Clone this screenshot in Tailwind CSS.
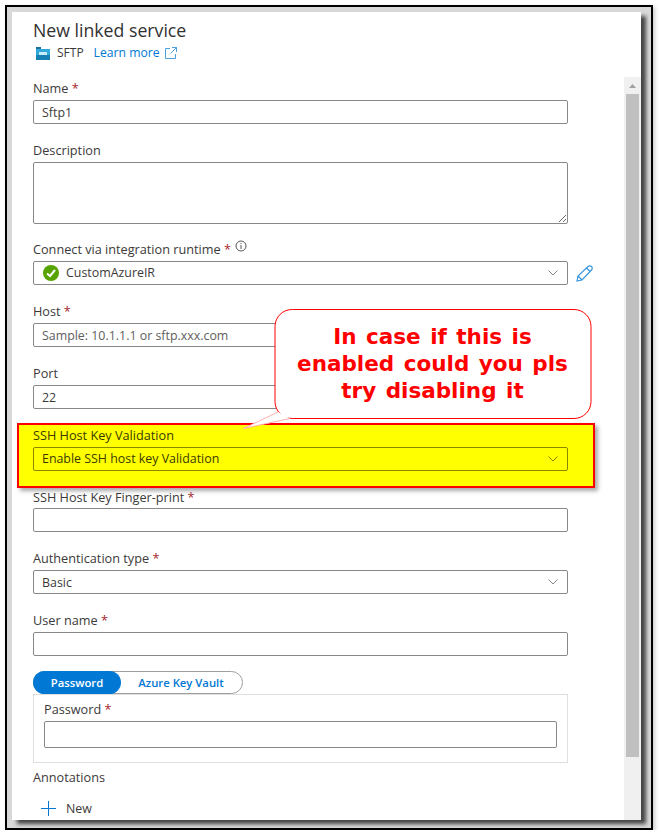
<!DOCTYPE html>
<html lang="en">
<head>
  <meta charset="UTF-8" />
  <title>New linked service</title>
  <script src="https://cdn.jsdelivr.net/npm/@tailwindcss/browser@4"></script>
</head>
<body class="bg-white text-[#3b3a39] text-[12.7px] font-['Open_Sans',sans-serif]">
  <!-- screenshot frame -->
  <div class="ml-[5px] mt-[5px] w-[648px] h-[825px] border-2 border-black bg-[#d9d9d9] pl-[5px] pt-[5px] shadow-[2px_2px_4px_#ccc]">
    <div class="relative w-[629px] h-[808px] bg-white shadow-[5px_4px_4px_#444] flex flex-col">
      <!-- header -->
      <div class="h-[65px] pl-[21px] shrink-0">
        <h1 class="pt-[6px] h-[30px] text-[17.700px] leading-[24px] text-[#323130]">New linked service</h1>
        <div class="flex items-center h-[20px] mt-[1px]">
          <svg class="ml-[3px] w-[14px] h-[13px]" viewBox="0 0 14 13">
            <path d="M0 1h5v1h9v11H0z" fill="#2fa8dc" />
            <path d="M0 8h14v5H0z" fill="#1580b4" />
            <path d="M0 0h5v2H0z" fill="#1c6f99" />
            <rect x="3" y="5" width="8" height="3" fill="#c4ecfa" />
          </svg>
          <span class="ml-[7px] text-[12px]">SFTP</span>
          <a class="ml-[10px] text-[#0078d4] text-[12.200px]">Learn more</a>
          <svg class="ml-[5px] w-[12px] h-[12px]" viewBox="0 0 12 12" fill="none" stroke="#4ba0e0" stroke-width="1">
            <path d="M5 1.500H.5v10h10V7M7 .5h4.500V5M11.500 .5 5.500 6.500" />
          </svg>
        </div>
      </div>

      <div class="flex flex-1 min-h-0">
        <!-- form -->
        <div class="flex-1 min-w-0 pl-[21px] pt-[3px] overflow-hidden">
          <label class="block h-[20px] leading-[16px]">Name <span class="text-[#a4262c]">*</span></label>
          <input value="Sftp1" class="block w-[535px] h-[24px] border border-[#8a8886] rounded-[2px] px-[8px] text-[12.400px] mb-[18px]" />

          <label class="block h-[20px] leading-[16px]">Description</label>
          <textarea class="block w-[535px] h-[62px] border border-[#8a8886] rounded-[2px] mb-[17px]"></textarea>

          <label class="flex h-[20px] leading-[16px]">Connect via integration runtime&nbsp;<span class="text-[#a4262c]">*</span>
            <svg class="ml-[4px] -mt-[1px] w-[12px] h-[12px]" viewBox="0 0 12 12" fill="none" stroke="#555"><circle cx="6" cy="6" r="5" /><path d="M6 5v4M6 3v1" /></svg>
          </label>
          <div class="flex items-center mb-[18px]">
            <div class="flex items-center w-[535px] h-[24px] border border-[#8a8886] rounded-[2px] pl-[9px] pr-[9px]">
              <svg class="w-[16px] h-[16px]" viewBox="0 0 16 16"><circle cx="8" cy="8" r="8" fill="#57a300" /><path d="M4 8.500 7 11l5-6" fill="none" stroke="#fff" stroke-width="2" /></svg>
              <span class="ml-[7px] pt-[1px] text-[12.400px]">CustomAzureIR</span>
              <svg class="ml-auto w-[10px] h-[6px]" viewBox="0 0 10 6" fill="none" stroke="#8a8886"><path d="M.5.500 5 5l4.500-4.500" /></svg>
            </div>
            <svg class="ml-[8px] w-[17px] h-[17px]" viewBox="0 0 17 17" fill="none" stroke="#3a96dd" stroke-width="1.200"><path d="M1 16l1-5L12 1.500a2 2 0 0 1 3.500 3.500L6 15zM2 11l4 4M10.500 3l3.500 3.500" /></svg>
          </div>

          <label class="block h-[20px] leading-[16px]">Host <span class="text-[#a4262c]">*</span></label>
          <input placeholder="Sample: 10.1.1.1 or sftp.xxx.com" class="block w-[535px] h-[24px] border border-[#8a8886] rounded-[2px] px-[8px] text-[12.400px] placeholder:text-[#605e5c] mb-[18px]" />

          <label class="block h-[20px] leading-[16px]">Port</label>
          <input value="22" class="block w-[535px] h-[24px] border border-[#8a8886] rounded-[2px] px-[8px] text-[12.400px]" />

          <!-- highlighted field -->
          <div class="-ml-[16px] mt-[14px] w-[578px] h-[65px] border-2 border-[#ff0000] bg-[#ffff00] pl-[14px] pt-[2px] text-[#3b3a00] shadow-[3px_3px_4px_#aaa]">
            <label class="block h-[20px] leading-[16px]">SSH Host Key Validation</label>
            <div class="flex items-center justify-between w-[535px] h-[24px] border border-[#8a8800] rounded-[2px] pl-[8px] pr-[9px] text-[12.400px]">
              <span class="pt-[1px]">Enable SSH host key Validation</span>
              <svg class="w-[10px] h-[6px]" viewBox="0 0 10 6" fill="none" stroke="#8a8800"><path d="M.5.500 5 5l4.500-4.500" /></svg>
            </div>
          </div>

          <label class="block h-[20px] leading-[18px]">SSH Host Key Finger-print <span class="text-[#a4262c]">*</span></label>
          <input class="block w-[535px] h-[24px] border border-[#8a8886] rounded-[2px] mb-[18px]" />

          <label class="block h-[20px] leading-[16px]">Authentication type <span class="text-[#a4262c]">*</span></label>
          <div class="flex items-center justify-between w-[535px] h-[24px] border border-[#8a8886] rounded-[2px] pl-[8px] pr-[9px] text-[12.400px] mb-[18px]">
            <span class="pt-[2px]">Basic</span>
            <svg class="w-[10px] h-[6px]" viewBox="0 0 10 6" fill="none" stroke="#8a8886"><path d="M.5.500 5 5l4.500-4.500" /></svg>
          </div>

          <label class="block h-[20px] leading-[16px]">User name <span class="text-[#a4262c]">*</span></label>
          <input class="block w-[535px] h-[24px] border border-[#8a8886] rounded-[2px]" />

          <!-- password / key vault toggle -->
          <div class="flex w-[210px] h-[23px] mt-[15px] border border-[#a19f9d] rounded-full text-[11.300px] font-semibold text-[#0078d4]">
            <span class="w-[88px] -m-px h-[23px] pt-[2px] bg-[#0078d4] text-white rounded-full flex items-center justify-center">Password</span>
            <span class="flex-1 pt-[2px] flex items-center justify-center">Azure Key Vault</span>
          </div>
          <div class="w-[535px] h-[69px] border border-[#e1dfdd] px-[10px] pt-[5px]">
            <label class="block h-[21px] leading-[18px]">Password <span class="text-[#a4262c]">*</span></label>
            <input class="block w-[513px] h-[27px] border border-[#8a8886] rounded-[2px]" />
          </div>

          <div class="h-[20px] leading-[20px] mt-[4px]">Annotations</div>
          <div class="flex items-center mt-[11px] ml-[8px] h-[20px]">
            <svg class="w-[15px] h-[15px]" viewBox="0 0 15 15" stroke="#0078d4"><path d="M7.500 0v15M0 7.500h15" /></svg>
            <span class="ml-[10px] pt-[2px] text-[12.400px]">New</span>
          </div>
        </div>

        <!-- scrollbar -->
        <div class="w-[17px] shrink-0 bg-[#f0f0f0] pl-[2px]">
          <svg class="block ml-[3px] mt-[7px] w-[7px] h-[4px]" viewBox="0 0 7 4"><path d="M3.500 0 7 4H0z" fill="#a0a0a0" /></svg>
          <div class="w-[13px] h-[663px] mt-[6px] bg-[#c0c0c0]"></div>
        </div>
      </div>

      <!-- callout over the form -->
      <div class="absolute left-[231px] top-[297px] w-[349px] h-[120px]">
        <svg class="absolute inset-0" width="349" height="120" viewBox="0 0 349 120">
          <path d="M49.500.500H331a17 17 0 0 1 17 17v75a17 17 0 0 1-17 17H49.500a17 17 0 0 1-17.500-17V17.500a17 17 0 0 1 17.500-17z" fill="#fff" stroke="#ff0000" />
          <path d="M35 103 .5 119.500 47 109.500z" fill="#fff" />
          <path d="M35 103 .5 119.500 47 109.500" fill="none" stroke="#ffb0b0" />
        </svg>
        <div class="absolute left-[31px] top-0 w-[317px] h-[108px] flex items-center justify-center text-center font-['DejaVu_Sans',sans-serif] font-bold text-[21.500px] leading-[27px] [word-spacing:2px] text-[#ff0000]">
          In case if this is<br />enabled could you pls<br />try disabling it
        </div>
      </div>
    </div>
  </div>
</body>
</html>
